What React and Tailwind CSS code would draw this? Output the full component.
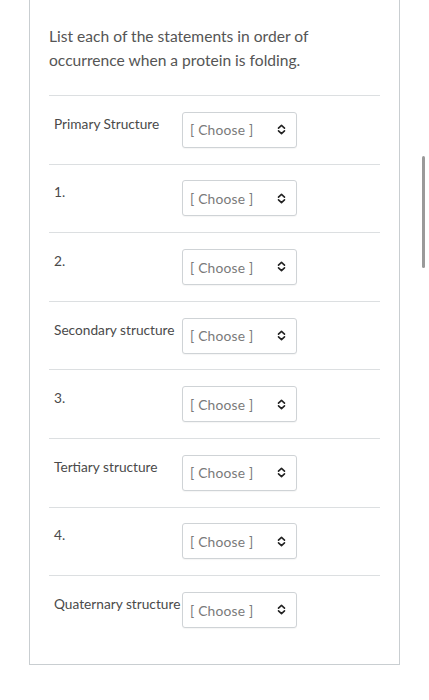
const rows = [
  "Primary Structure",
  "1.",
  "2.",
  "Secondary structure",
  "3.",
  "Tertiary structure",
  "4.",
  "Quaternary structure",
];

/* up/down chevrons like the native select arrow */
const UpDown = () => (
  <svg width="9" height="11" viewBox="0 0 9 11" fill="none" className="block">
    <path d="M1.5 4.2 L4.5 1.4 L7.5 4.2" stroke="#222" strokeWidth="1.6" strokeLinecap="round" strokeLinejoin="round" />
    <path d="M1.5 6.8 L4.5 9.6 L7.5 6.8" stroke="#222" strokeWidth="1.6" strokeLinecap="round" strokeLinejoin="round" />
  </svg>
);

const ChooseBox = () => (
  <div className="flex h-[36px] w-[115px] items-center justify-between rounded-[3px] border border-[#cfd3d6] bg-white pl-[7px] pr-[10px] shadow-[0_1px_1px_rgba(0,0,0,0.04)]">
    <span className="mt-[2px] text-[13.8px] tracking-[0.2px] text-[#7a7a7a]">[ Choose ]</span>
    <UpDown />
  </div>
);

const App = () => {
  return (
    <div className="relative min-h-[700px] bg-white font-['Lato','Liberation_Sans',sans-serif]">
      <div className="ml-[29px] w-[371px] border-x border-b border-[#c9ced1] px-[19px] pt-[24px] pb-[20px]">
        <p className="text-[15.6px] leading-[24px] text-[#555]">
          List each of the statements in order of occurrence when a protein is folding.
        </p>

        <div className="mt-[23px]">
          {rows.map((label) => (
            <div key={label} className="flex border-t border-[#dcdfe1] py-[15.8px]">
              <div className="w-[133px] whitespace-nowrap pl-[5px] pt-[2px] text-[13.7px] leading-[20px] text-[#4a4a4a]">
                {label}
              </div>
              <ChooseBox />
            </div>
          ))}
        </div>
      </div>

      {/* overlay scrollbar */}
      <div className="absolute left-[422px] top-[156px] h-[112px] w-[3px] rounded-full bg-[#9a9a9a]" />
    </div>
  );
};

export default App;
